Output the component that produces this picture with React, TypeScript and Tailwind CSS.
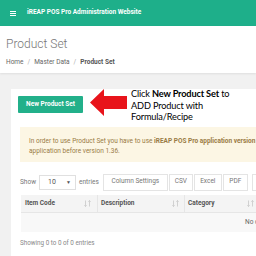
import React from "react";

const SortIcon = () => (
  <svg width="7" height="7" viewBox="0 0 7 7" className="text-[#c8c8c8]">
    <path d="M1.5 0.5v6M0.3 5.3l1.2 1.2 1.2-1.2M5.5 6.5v-6M4.3 1.7l1.2-1.2 1.2 1.2" stroke="currentColor" strokeWidth="0.8" fill="none" />
  </svg>
);

export default function App() {
  return (
    <div className="w-[256px] h-[256px] overflow-hidden bg-[#f1f1f1] relative" style={{ fontFamily: "Roboto, 'Liberation Sans', sans-serif" }}>
      <div className="w-[256px]">
        <div className="h-[26px] bg-[#1eaf8a] flex items-center shadow-[0_1px_1px_rgba(0,0,0,0.15)]">
          <div className="ml-[10px] w-[6px] flex flex-col gap-[1px]">
            <div className="h-[1px] bg-white"></div>
            <div className="h-[1px] bg-white"></div>
            <div className="h-[1px] bg-white"></div>
          </div>
          <div className="ml-[11px] text-white text-[6.5px] font-bold whitespace-nowrap">iREAP POS Pro Administration Website</div>
        </div>
        <div className="h-[47px] bg-white pl-[6px] pt-[10px] shadow-[0_1px_2px_rgba(0,0,0,0.08)]">
          <div className="text-[12px] leading-[16px] font-light text-[#777]">Product Set</div>
          <div className="mt-[6px] text-[6.5px] text-[#666] whitespace-nowrap flex gap-[4px]">
            <span>Home</span><span className="text-[#aaa]">/</span><span>Master Data</span><span className="text-[#aaa]">/</span><span className="font-bold text-[#555]">Product Set</span>
          </div>
        </div>
        <div className="pl-[11px] pt-[16px]">
          <div className="w-[300px] h-[200px] bg-white pt-[7px] pl-[7px]">
            <div className="flex items-start h-[17px]">
              <div className="w-[65px] h-[17px] bg-[#22b08a] rounded-[1px] text-white text-[6.5px] font-bold flex items-center justify-center whitespace-nowrap">New Product Set</div>
              <svg width="38" height="27" viewBox="0 0 38 27" className="ml-[6px] -mt-[7px] shrink-0">
                <polygon points="1,13.5 15,0 15,7 38,7 38,20 15,20 15,27" fill="#e8141b" />
              </svg>
              <div className="ml-[4px] -mt-[8px] text-[9.2px] leading-[11.7px] tracking-[-0.15px] text-black whitespace-nowrap" style={{ fontFamily: "Lato, 'Open Sans', sans-serif" }}>
                <div>Click <b>New Product Set</b> to</div>
                <div>ADD Product with</div>
                <div>Formula/Recipe</div>
              </div>
            </div>
            <div className="mt-[14px] ml-[2px] h-[35px] bg-[#fcf6e4] pl-[9px] pt-[9px] text-[6.5px] leading-[10px] text-[#9a7b45] whitespace-nowrap">
              <div>In order to use Product Set you have to use <b>iREAP POS Pro application version</b></div>
              <div>application before version 1.36.</div>
            </div>
            <div className="mt-[13px] ml-[2px] flex items-center h-[15px] text-[6.5px] text-[#777] whitespace-nowrap">
              <span>Show</span>
              <div className="ml-[3px] w-[37px] h-[15px] border border-[#e0e0e0] flex items-center pl-[8px] pr-[4px] text-[#555] text-[7px]">
                <span>10</span>
                <span className="ml-auto text-[5px]">▼</span>
              </div>
              <span className="ml-[3px]">entries</span>
              <div className="ml-[4px] flex h-[17px] -mt-[1px]">
                <div className="w-[65px] border border-[#e4e4e4] flex items-center justify-center">Column Settings</div>
                <div className="ml-[1px] w-[24px] border border-[#e4e4e4] flex items-center justify-center">CSV</div>
                <div className="ml-[1px] w-[28px] border border-[#e4e4e4] flex items-center justify-center">Excel</div>
                <div className="ml-[1px] w-[25px] border border-[#e4e4e4] flex items-center justify-center">PDF</div>
                <div className="ml-[4px] w-[25px] border border-[#e4e4e4]"></div>
              </div>
            </div>
            <div className="mt-[5px] ml-[3px] w-[300px] text-[6.5px] whitespace-nowrap">
              <div className="h-[18px] bg-[#f4f4f4] flex items-center font-bold text-[#555] border-b border-[#e6e6e6]">
                <div className="w-[77px] pl-[4px] flex items-center justify-between pr-[6px] h-full border-r border-[#e6e6e6]"><span>Item Code</span><SortIcon /></div>
                <div className="w-[87px] pl-[3px] flex items-center justify-between pr-[5px] h-full border-r border-[#e6e6e6]"><span>Description</span><SortIcon /></div>
                <div className="w-[75px] pl-[3px] flex items-center justify-between pr-[6px] h-full"><span>Category</span><SortIcon /></div>
              </div>
              <div className="h-[19px] bg-[#f8f8f8] flex items-center text-[#666]">
                <span className="ml-[224px]">No data available in table</span>
              </div>
            </div>
            <div className="mt-[7px] ml-[2px] text-[6.3px] text-[#888] whitespace-nowrap">Showing 0 to 0 of 0 entries</div>
          </div>
        </div>
      </div>
    </div>
  );
}
